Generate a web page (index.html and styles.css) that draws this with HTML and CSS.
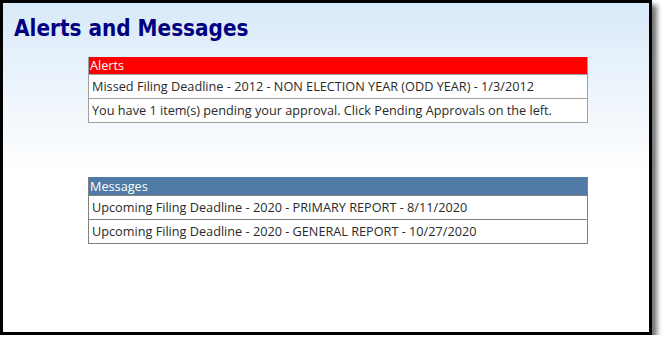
FILE: index.html
```html
<!DOCTYPE html>
<html>
<head>
<meta charset="utf-8">
<link rel="stylesheet" href="styles.css">
</head>
<body>
<div class="frame">
  <h1 class="title">Alerts and Messages</h1>
  <div class="panel alerts">
    <div class="panel-head">Alerts</div>
    <div class="panel-row">Missed Filing Deadline - 2012 - NON ELECTION YEAR (ODD YEAR) - 1/3/2012</div>
    <div class="panel-row">You have 1 item(s) pending your approval. Click Pending Approvals on the left.</div>
  </div>
  <div class="panel messages">
    <div class="panel-head">Messages</div>
    <div class="panel-row">Upcoming Filing Deadline - 2020 - PRIMARY REPORT - 8/11/2020</div>
    <div class="panel-row">Upcoming Filing Deadline - 2020 - GENERAL REPORT - 10/27/2020</div>
  </div>
</div>
</body>
</html>
```
FILE: styles.css
```css
html, body {
  margin: 0;
  padding: 0;
  background: #ffffff;
}
.frame {
  box-sizing: border-box;
  width: 652px;
  height: 335px;
  border: 3px solid #000;
  background: linear-gradient(to bottom, #d8e9f8 0px, #eef5fc 90px, #ffffff 170px);
  box-shadow: 5px 5px 5px rgba(0,0,0,0.55);
  padding: 10px 0 0 11px;
  font-family: "Open Sans", "Noto Sans", sans-serif;
}
.title {
  margin: 0;
  font-family: "DejaVu Sans Condensed", "DejaVu Sans", sans-serif;
  font-stretch: condensed;
  font-weight: bold;
  font-size: 22.3px;
  line-height: 30px;
  color: #000080;
}
.panel {
  box-sizing: border-box;
  width: 500px;
  margin-left: 74px;
  border: 1px solid #a0a0a0;
  border-top: none;
  background: #fff;
}
.alerts {
  margin-top: 14px;
}
.messages {
  margin-top: 54px;
  border-color: #808080;
}
.panel-head {
  height: 17px;
  line-height: 17px;
  color: #fff;
  font-size: 12.7px;
  padding-left: 1px;
}
.alerts .panel-head { background: #ff0000; }
.messages .panel-head { background: #4f7ba6; height: 18px; line-height: 18px; }
.panel-row {
  height: 23px;
  line-height: 23px;
  border-top: 1px solid #a0a0a0;
  padding-left: 3px;
  font-size: 12.7px;
  color: #2a2a2a;
}
.messages .panel-row { border-top-color: #808080; }
```
